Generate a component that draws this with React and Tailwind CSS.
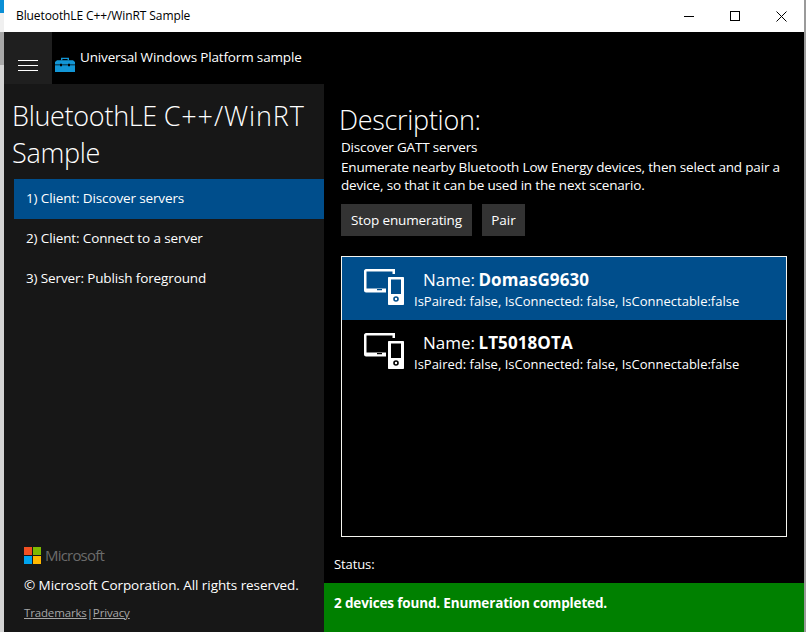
const font = "font-['Open_Sans','Noto_Sans',sans-serif]";

const scenarios = ['1) Client: Discover servers', '2) Client: Connect to a server', '3) Server: Publish foreground'];

const devices = [
  { name: 'DomasG9630', selected: true },
  { name: 'LT5018OTA', selected: false },
];

function DevicesIcon() {
  return (
    <svg width="40" height="36" viewBox="0 0 40 36" className="shrink-0">
      <path
        fillRule="evenodd"
        fill="white"
        d="M2 0H31V5H28.5V2.5H2.5V19.5H22V23.5H2C1 23.5 0 22.5 0 21.5V2C0 1 1 0 2 0ZM13 20V21.2H18V20Z"
      />
      <path
        fillRule="evenodd"
        fill="white"
        d="M25 8H39C39.6 8 40 8.4 40 9V35C40 35.6 39.6 36 39 36H25C24.4 36 24 35.6 24 35V9C24 8.4 24.4 8 25 8ZM27 10.5V25H37V10.5ZM32 27.2A2.8 2.8 0 1 0 32 32.8A2.8 2.8 0 1 0 32 27.2ZM32 28.8A1.2 1.2 0 1 1 32 31.2A1.2 1.2 0 1 1 32 28.8Z"
      />
    </svg>
  );
}

function ToolboxIcon() {
  return (
    <svg width="20" height="15" viewBox="0 0 20 18" preserveAspectRatio="none" className="shrink-0">
      <path d="M6 4V1H14V4H12.6V2.5H7.4V4Z" fill="#1296d6" />
      <path d="M0 6L2 4H18L20 6V9H15V8H13V9H7V8H5V9H0Z" fill="#1296d6" />
      <path d="M0 10H5V11H7V10H13V11H15V10H20V18H0Z" fill="#1296d6" />
    </svg>
  );
}

function DeviceRow({ device }) {
  return (
    <div className={`h-[63px] flex pl-[22px] ${device.selected ? 'bg-[#004e8c] pt-[12px]' : 'bg-black pt-[13px]'}`}>
      <DevicesIcon />
      <div className={`ml-[10px] text-white ${device.selected ? '-mt-px' : '-mt-[2px]'}`}>
        <div className="pl-[9px] text-[17px] leading-[24px] whitespace-nowrap">
          Name: <span className="font-bold tracking-[0.1px] -ml-px">{device.name}</span>
        </div>
        <div className="text-[13px] leading-[18px] whitespace-nowrap">
          IsPaired: false, IsConnected: false, IsConnectable:false
        </div>
      </div>
    </div>
  );
}

export default function App() {
  return (
    <div className={`${font} w-[806px] h-[632px] flex bg-[#c8c8c8] overflow-hidden`}>
      <div className="w-[4px] shrink-0 flex flex-col">
        <div className="h-[13px] bg-[#0a8fd6]" />
        <div className="h-[19px] bg-[#f0f0f0]" />
        <div className="h-[33px] bg-[#a8a8a8]" />
        <div className="flex-1 bg-[#d4d4d4]" />
      </div>
      <div className="w-[800px] shrink-0 flex flex-col bg-black text-white">
        {/* title bar */}
        <div className="h-[32px] shrink-0 bg-white text-black flex items-center pl-[12px]">
          <span className="text-[12px] tracking-[-0.1px] flex-1 whitespace-nowrap">BluetoothLE C++/WinRT Sample</span>
          <div className="flex items-center">
            <div className="w-[46px] flex justify-center">
              <svg width="10" height="10" viewBox="0 0 10 10"><path d="M0 5.5H10" stroke="black" /></svg>
            </div>
            <div className="w-[46px] flex justify-center">
              <svg width="10" height="10" viewBox="0 0 10 10"><rect x="0.5" y="0.5" width="9" height="9" fill="none" stroke="black" /></svg>
            </div>
            <div className="w-[46px] flex justify-center">
              <svg width="11" height="11" viewBox="0 0 11 11"><path d="M0.5 0.5L10.5 10.5M10.5 0.5L0.5 10.5" stroke="black" /></svg>
            </div>
          </div>
        </div>

        {/* app header */}
        <div className="h-[52px] shrink-0 flex">
          <div className="w-[48px] bg-[#1f1f1f] flex flex-col justify-center gap-[4px] pl-[14px] pt-[15px]">
            <div className="w-[20px] h-px bg-white" />
            <div className="w-[20px] h-px bg-white" />
            <div className="w-[20px] h-px bg-white" />
          </div>
          <div className="flex items-start pl-[3px]">
            <div className="pt-[25px]"><ToolboxIcon /></div>
            <span className="ml-[5px] mt-[14px] text-[13.5px] leading-[22px] tracking-[-0.16px] whitespace-nowrap">Universal Windows Platform sample</span>
          </div>
        </div>

        <div className="flex-1 flex min-h-0">
          {/* sidebar */}
          <div className="w-[320px] shrink-0 bg-[#171717] flex flex-col">
            <h1 className="pl-[8px] pt-[13px] text-[27px] leading-[37px] font-light tracking-[-0.3px] whitespace-nowrap">
              BluetoothLE <span className="tracking-[0.9px]">C++/WinRT</span>
              <br />
              Sample
            </h1>
            <div className="mt-[8px] ml-[10px]">
              {scenarios.map((s, i) => (
                <div key={s} className={`h-[40px] flex items-center pl-[12px] pb-[2px] text-[13.5px] tracking-[-0.13px] ${i === 0 ? 'bg-[#004e8c]' : ''}`}>
                  {s}
                </div>
              ))}
            </div>
            <div className="mt-auto pl-[20px] pb-[11px]">
              <div className="flex items-center gap-[4px] text-[#6b6b6b] text-[15px] leading-[18px] tracking-[-0.8px]">
                <div className="grid grid-cols-2 gap-px w-[17px] h-[17px]">
                  <div className="bg-[#f25022]" />
                  <div className="bg-[#7fba00]" />
                  <div className="bg-[#00a4ef]" />
                  <div className="bg-[#ffb900]" />
                </div>
                Microsoft
              </div>
              <p className="mt-[11px] text-[13.5px] leading-[20px] tracking-[-0.07px] whitespace-nowrap">© Microsoft Corporation. All rights reserved.</p>
              <div className="mt-[10px] text-[11.5px] leading-[16px] text-[#a6a6a6] tracking-[-0.15px]">
                <span className="underline">Trademarks</span>|<span className="underline">Privacy</span>
              </div>
            </div>
          </div>

          {/* main */}
          <div className="flex-1 min-w-0 flex flex-col">
            <div className="pl-[15px] pt-[18px] flex-1 flex flex-col">
              <h2 className="text-[27px] leading-[36px] font-light tracking-[-0.3px]">Description:</h2>
              <div className="pl-[2px] text-[13.5px] leading-[19px] tracking-[-0.18px]">Discover GATT servers</div>
              <p className="pl-[2px] mt-px text-[13.5px] leading-[18px] w-[460px] tracking-[-0.17px]">
                Enumerate nearby Bluetooth Low Energy devices, then select and pair a device, so that it can be used in the next scenario.
              </p>
              <div className="flex gap-[10px] mt-[10px] ml-[2px]">
                <div className="h-[32px] w-[131px] bg-[#333333] flex items-center justify-center text-[13.5px] tracking-[-0.15px]">Stop enumerating</div>
                <div className="h-[32px] w-[43px] bg-[#333333] flex items-center justify-center text-[13.5px]">Pair</div>
              </div>
              <div className="mt-[20px] ml-[2px] w-[446px] h-[281px] border border-[#f5f5f0] bg-black">
                {devices.map((d) => (
                  <DeviceRow key={d.name} device={d} />
                ))}
              </div>
            </div>
            <div className="pl-[10px] h-[28px] text-[13px] leading-[19px] tracking-[-0.1px]">Status:</div>
            <div className="h-[49px] shrink-0 bg-[#008000] flex items-center pl-[10px] pb-[8px] text-[13.5px] font-bold tracking-[-0.15px]">
              2 devices found. Enumeration completed.
            </div>
          </div>
        </div>
      </div>
      <div className="w-[2px] shrink-0 bg-[#9a9a9a]" />
    </div>
  );
}
